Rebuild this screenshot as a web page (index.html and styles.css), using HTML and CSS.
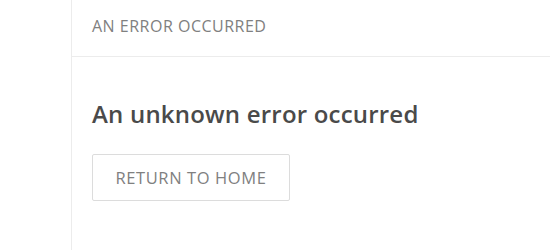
FILE: index.html
```html
<!DOCTYPE html>
<html>
<head>
<meta charset="utf-8">
<link rel="stylesheet" href="styles.css">
</head>
<body>
<div class="layout">
  <aside class="sidebar"></aside>
  <main class="main">
    <header class="topbar">AN ERROR OCCURRED</header>
    <section class="content">
      <h1 class="title">An unknown error occurred</h1>
      <button class="btn">RETURN TO HOME</button>
    </section>
  </main>
</div>
</body>
</html>
```
FILE: styles.css
```css
html, body {
  margin: 0;
  padding: 0;
  background: #fff;
  font-family: "Open Sans", "Noto Sans", sans-serif;
}
.layout {
  display: flex;
  height: 250px;
}
.sidebar {
  width: 71px;
  border-right: 1px solid #ececec;
  flex: none;
}
.main {
  flex: 1;
  display: flex;
  flex-direction: column;
}
.topbar {
  height: 41px;
  padding: 15px 0 0 20px;
  border-bottom: 1px solid #ececec;
  font-size: 16px;
  line-height: 22px;
  letter-spacing: 0.5px;
  color: #808080;
}
.content {
  padding: 0 20px;
}
.title {
  margin: 42px 0 0 0;
  font-size: 24px;
  font-weight: 600;
  letter-spacing: 0.2px;
  color: #4a4a4a;
  line-height: 30px;
}
.btn {
  display: block;
  margin-top: 25px;
  width: 198px;
  height: 47px;
  background: #fff;
  border: 1px solid #dcdcdc;
  border-radius: 2px;
  font-family: inherit;
  font-size: 16.5px;
  letter-spacing: 0.6px;
  color: #808080;
  padding: 0 0 1px 0;
}
```
